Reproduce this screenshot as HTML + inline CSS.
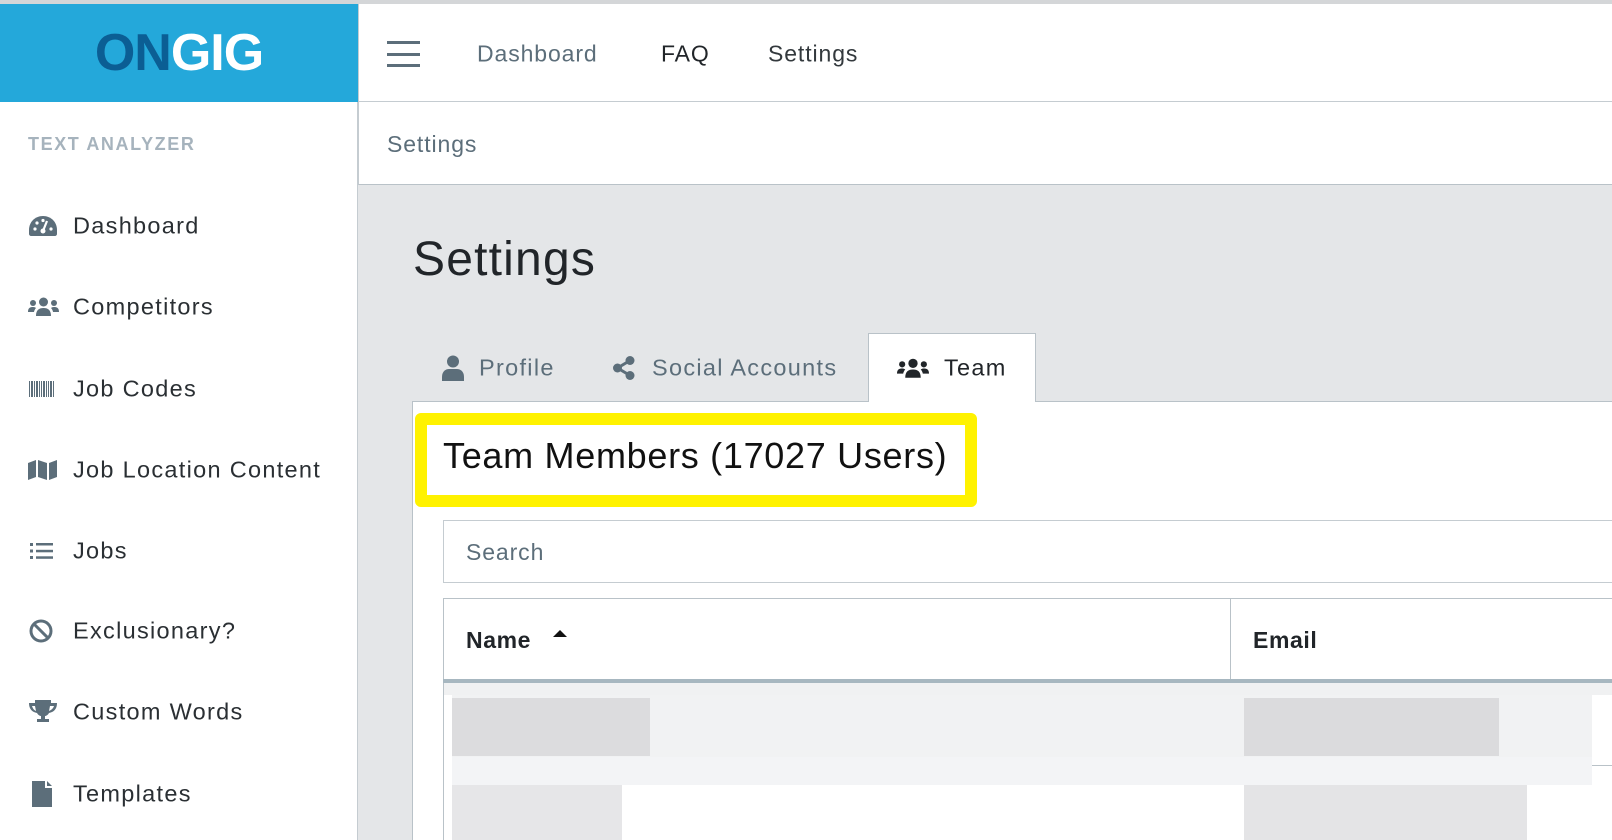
<!DOCTYPE html>
<html><head><meta charset="utf-8"><style>
*{margin:0;padding:0;box-sizing:border-box}
html,body{width:1612px;height:840px;overflow:hidden}
body{background:#e4e6e8;font-family:"Liberation Sans",sans-serif;position:relative;color:#212529}
.abs{position:absolute}
#topline{left:0;top:0;width:1612px;height:4px;background:#d4d6d8}
#logo{left:0;top:4px;width:358px;height:98px;background:#24a8da;text-align:center;font:bold 52px/98px "Liberation Sans",sans-serif;letter-spacing:-1px}
#logo .on{color:#0b5e94}#logo .gig{color:#fff}
#nav{left:358px;top:4px;width:1254px;height:98px;background:#fff;border-bottom:1px solid #c5ccd1;border-left:1px solid #c5ccd1}
#side{left:0;top:102px;width:358px;height:760px;background:#fff;border-right:1px solid #c5ccd1}
#crumb{left:358px;top:102px;width:1254px;height:83px;background:#fff;border-bottom:1px solid #b9c2c8;border-left:1px solid #c5ccd1}
.navt{font-size:23px;top:54px;transform:translateY(-50%);letter-spacing:0.9px}
.menu{left:73px;font-size:23.5px;color:#2a2f33;transform:translateY(-50%);letter-spacing:1.3px}
.ico{left:28px;transform:translateY(-50%)}
.tab{font-size:23.5px;top:368px;transform:translateY(-50%);color:#5c6e7a;letter-spacing:1.3px}
</style></head><body>
<div class="abs" id="topline"></div>
<div class="abs" id="logo"><span class="on">ON</span><span class="gig">GIG</span></div>
<div class="abs" id="nav"></div>
<div class="abs" style="left:387px;top:41px;width:33px;height:26px">
<div style="height:3px;background:#5c6e7a;margin-bottom:8.5px"></div><div style="height:3px;background:#5c6e7a;margin-bottom:8.5px"></div><div style="height:3px;background:#5c6e7a"></div></div>
<div class="abs navt" style="left:477px;color:#5c6e7a">Dashboard</div>
<div class="abs navt" style="left:661px;color:#212529">FAQ</div>
<div class="abs navt" style="left:768px;color:#33393d">Settings</div>
<div class="abs" id="side"></div>
<div class="abs" style="left:28px;top:134px;font:bold 18px 'Liberation Sans',sans-serif;letter-spacing:1.6px;color:#a6b3bd">TEXT ANALYZER</div>
<div class="abs" id="crumb"></div>
<div class="abs" style="left:387px;top:131px;font-size:23px;color:#5c6e7a;letter-spacing:0.9px">Settings</div>

<svg class="abs ico" style="top:226px" width="30" height="22" viewBox="0 0 30 22"><path d="M15 1C7 1 1 7 1 15v4c0 1 1 2 2 2h24c1 0 2-1 2-2v-4C29 7 23 1 15 1z" fill="#5c6e7a"/><circle cx="7" cy="14" r="1.6" fill="#fff"/><circle cx="9" cy="8" r="1.6" fill="#fff"/><circle cx="15" cy="5.5" r="1.6" fill="#fff"/><circle cx="23" cy="14" r="1.6" fill="#fff"/><path d="M19 6l-4 10" stroke="#fff" stroke-width="2.2"/><circle cx="15" cy="16" r="2.5" fill="#fff"/></svg>
<div class="abs menu" style="top:226px">Dashboard</div>
<svg class="abs ico" style="top:307px" width="31" height="20" viewBox="0 0 31 20"><circle cx="15.5" cy="5" r="4.5" fill="#5c6e7a"/><circle cx="5" cy="6" r="3" fill="#5c6e7a"/><circle cx="26" cy="6" r="3" fill="#5c6e7a"/><path d="M8 19c0-6 3-8 7.5-8s7.5 2 7.5 8z M0 15c0-4 2-5 5-5 2 0 3 1 3 1-1 1-2 3-2 4z M31 15c0-4-2-5-5-5-2 0-3 1-3 1 1 1 2 3 2 4z" fill="#5c6e7a"/></svg>
<div class="abs menu" style="top:307px">Competitors</div>
<svg class="abs ico" style="top:389px" width="27" height="16" viewBox="0 0 27 16" fill="#5c6e7a"><rect x="1" y="0" width="1" height="16"/><rect x="3" y="0" width="2" height="16"/><rect x="6" y="0" width="1" height="16"/><rect x="8" y="0" width="2" height="16"/><rect x="11" y="0" width="1" height="16"/><rect x="13" y="0" width="1" height="16"/><rect x="15" y="0" width="2" height="16"/><rect x="18" y="0" width="1" height="16"/><rect x="20" y="0" width="1" height="16"/><rect x="22" y="0" width="2" height="16"/><rect x="25" y="0" width="1" height="16"/></svg>
<div class="abs menu" style="top:389px">Job Codes</div>
<svg class="abs ico" style="top:470px" width="30" height="20" viewBox="0 0 30 20" fill="#5c6e7a"><path d="M0 3l8-3v17l-8 3z M10 0l9 3v17l-9-3z M21 3l8-3v17l-8 3z"/></svg>
<div class="abs menu" style="top:470px">Job Location Content</div>
<svg class="abs ico" style="top:551px" width="26" height="18" viewBox="0 0 26 18" fill="#5c6e7a"><rect x="2" y="1" width="3" height="3"/><rect x="8" y="1" width="17" height="2.5"/><rect x="2" y="7.5" width="3" height="3"/><rect x="8" y="7.8" width="17" height="2.5"/><rect x="2" y="14" width="3" height="3"/><rect x="8" y="14.3" width="17" height="2.5"/></svg>
<div class="abs menu" style="top:551px">Jobs</div>
<svg class="abs ico" style="top:631px" width="26" height="26" viewBox="0 0 26 26"><circle cx="13" cy="13" r="10" fill="none" stroke="#5c6e7a" stroke-width="3"/><path d="M6 6l14 14" stroke="#5c6e7a" stroke-width="3"/></svg>
<div class="abs menu" style="top:631px">Exclusionary?</div>
<svg class="abs ico" style="top:712px" width="30" height="24" viewBox="0 0 30 24" fill="#5c6e7a"><path d="M7 0h16v3h6c0 6-3 9-8 10-1 2-3 3-4 3v3h4v3H9v-3h4v-3c-1 0-3-1-4-3C4 12 1 9 1 3h6z M4 6c1 3 2 4 4 5L7 6z M26 6l-4 0-1 5c2-1 4-2 5-5z"/></svg>
<div class="abs menu" style="top:712px">Custom Words</div>
<svg class="abs ico" style="top:794px;left:32px" width="20" height="26" viewBox="0 0 20 26" fill="#5c6e7a"><path d="M0 0h13v7h7v19H0z M15 0l5 5h-5z"/></svg>
<div class="abs menu" style="top:794px">Templates</div>

<div class="abs" style="left:413px;top:232px;font-size:48px;color:#212529;letter-spacing:1.2px">Settings</div>
<div class="abs" style="left:868px;top:333px;width:168px;height:70px;background:#fff;border:1px solid #b9c2c8;border-bottom:none"></div>
<div class="abs" style="left:412px;top:401px;width:1200px;height:460px;background:#fff;border-left:1px solid #b9c2c8;border-top:1px solid #b9c2c8"></div>
<div class="abs" style="left:869px;top:400px;width:166px;height:3px;background:#fff"></div>
<svg class="abs" style="left:442px;top:355px" width="22" height="26" viewBox="0 0 22 26" fill="#5c6e7a"><circle cx="11" cy="6.5" r="6"/><path d="M0 22c0-6 4-8 7-8h8c3 0 7 2 7 8v4H0z"/></svg>
<div class="abs tab" style="left:479px">Profile</div>
<svg class="abs" style="left:613px;top:356px" width="22" height="24" viewBox="0 0 22 24" fill="#5c6e7a"><circle cx="17" cy="4.5" r="4.5"/><circle cx="4.5" cy="12" r="4.5"/><circle cx="17" cy="19.5" r="4.5"/><path d="M4.5 12L17 4.5M4.5 12L17 19.5" stroke="#5c6e7a" stroke-width="3"/></svg>
<div class="abs tab" style="left:652px">Social Accounts</div>
<svg class="abs" style="left:897px;top:358px" width="32" height="21" viewBox="0 0 31 20"><circle cx="15.5" cy="5" r="4.5" fill="#212529"/><circle cx="5" cy="6" r="3" fill="#212529"/><circle cx="26" cy="6" r="3" fill="#212529"/><path d="M8 19c0-6 3-8 7.5-8s7.5 2 7.5 8z M0 15c0-4 2-5 5-5 2 0 3 1 3 1-1 1-2 3-2 4z M31 15c0-4-2-5-5-5-2 0-3 1-3 1 1 1 2 3 2 4z" fill="#212529"/></svg>
<div class="abs tab" style="left:944px;color:#212529">Team</div>

<div class="abs" style="left:415px;top:413px;width:562px;height:94px;border:12px solid #fff200;border-radius:6px;background:#fff"></div>
<div class="abs" style="left:443px;top:435px;font-size:36px;color:#111;letter-spacing:0.7px">Team Members (17027 Users)</div>

<div class="abs" style="left:443px;top:520px;width:1170px;height:63px;border:1px solid #c5ccd1;border-right:none"></div>
<div class="abs" style="left:466px;top:539px;font-size:23px;color:#5c6e7a;letter-spacing:0.9px">Search</div>

<div class="abs" style="left:443px;top:598px;width:1170px;height:270px;border:1px solid #b9c2c8;border-right:none"></div>
<div class="abs" style="left:1230px;top:598px;width:1px;height:100px;background:#b9c2c8"></div>
<div class="abs" style="left:443px;top:679px;width:1170px;height:4px;background:#a7b7c0"></div>
<div class="abs" style="left:466px;top:627px;font:bold 23px 'Liberation Sans',sans-serif;letter-spacing:0.6px">Name</div>
<div class="abs" style="left:553px;top:630px;width:0;height:0;border-left:7px solid transparent;border-right:7px solid transparent;border-bottom:7px solid #111"></div>
<div class="abs" style="left:1253px;top:627px;font:bold 23px 'Liberation Sans',sans-serif;letter-spacing:0.6px">Email</div>

<div class="abs" style="left:444px;top:683px;width:1168px;height:12px;background:#f0f1f2"></div>
<div class="abs" style="left:452px;top:695px;width:1140px;height:85px;background:#f1f2f3"></div>
<div class="abs" style="left:452px;top:698px;width:198px;height:58px;background:#dcdcde"></div>
<div class="abs" style="left:1244px;top:698px;width:255px;height:58px;background:#dbdbdd"></div>
<div class="abs" style="left:452px;top:757px;width:1140px;height:28px;background:#f3f4f6"></div>
<div class="abs" style="left:1592px;top:765px;width:20px;height:1px;background:#b9c2c8"></div>
<div class="abs" style="left:452px;top:785px;width:170px;height:60px;background:#e6e6e8"></div>
<div class="abs" style="left:1244px;top:785px;width:283px;height:60px;background:#e4e4e6"></div>
</body></html>
